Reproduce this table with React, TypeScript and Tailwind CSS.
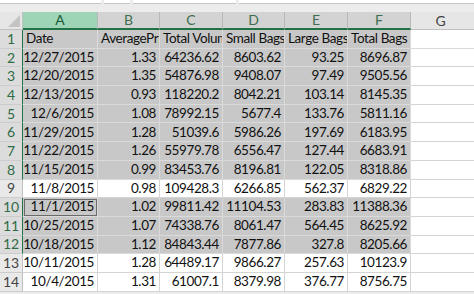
import React from 'react';

const widths = ['w-[75px]', 'w-[62px]', 'w-[63px]', 'w-[62px]', 'w-[63px]', 'w-[63px]'];
const letters = ['A', 'B', 'C', 'D', 'E', 'F'];

const header = ['Date', 'AveragePrice', 'Total Volume', 'Small Bags', 'Large Bags', 'Total Bags'];

const rows: string[][] = [
  ['12/27/2015', '1.33', '64236.62', '8603.62', '93.25', '8696.87'],
  ['12/20/2015', '1.35', '54876.98', '9408.07', '97.49', '9505.56'],
  ['12/13/2015', '0.93', '118220.2', '8042.21', '103.14', '8145.35'],
  ['12/6/2015', '1.08', '78992.15', '5677.4', '133.76', '5811.16'],
  ['11/29/2015', '1.28', '51039.6', '5986.26', '197.69', '6183.95'],
  ['11/22/2015', '1.26', '55979.78', '6556.47', '127.44', '6683.91'],
  ['11/15/2015', '0.99', '83453.76', '8196.81', '122.05', '8318.86'],
  ['11/8/2015', '0.98', '109428.3', '6266.85', '562.37', '6829.22'],
  ['11/1/2015', '1.02', '99811.42', '11104.53', '283.83', '11388.36'],
  ['10/25/2015', '1.07', '74338.76', '8061.47', '564.45', '8625.92'],
  ['10/18/2015', '1.12', '84843.44', '7877.86', '327.8', '8205.66'],
  ['10/11/2015', '1.28', '64489.17', '9866.27', '257.63', '10123.9'],
  ['10/4/2015', '1.31', '61007.1', '8379.98', '376.77', '8756.75'],
];

// rows 9, 13 and 14 are outside the selection
const isSelected = (n: number) => !(n === 9 || n === 13 || n === 14);

const RowHead = ({ n }: { n: number }) => {
  const sel = isSelected(n);
  return (
    <div
      className={`w-[23px] shrink-0 flex items-center justify-center text-[14px] tracking-normal border-b border-[#cccccc] border-r ${
        sel ? 'bg-[#dcdcdc] text-[#2f6b45] border-r-[#217346]' : 'bg-[#e9e9e9] text-[#444] border-r-[#c0c0c0]'
      }`}
    >
      {n}
    </div>
  );
};

export default function App() {
  return (
    <div
      className="w-[474px] h-[294px] overflow-hidden bg-[#ececec] text-[13.5px] tracking-[-0.4px] leading-none text-[#111]"
      style={{ fontFamily: 'Lato, "Liberation Sans", sans-serif' }}
    >
      {/* formula bar strip */}
      <div className="flex gap-[3px] h-[4px]">
        <div className="w-[101px] bg-white border-b border-[#c6c6c6]" />
        <div className="w-[26px] bg-white border-b border-[#c6c6c6]" />
        <div className="w-[103px] bg-white border-b border-[#c6c6c6]" />
        <div className="flex-1 bg-white border-b border-[#c6c6c6]" />
      </div>
      <div className="h-[8px]" />

      {/* column headers */}
      <div className="flex h-[18px] text-[14px] tracking-normal">
        <div className="w-[23px] shrink-0 relative bg-[#e6e6e6] border-r border-b border-[#c0c0c0]">
          <svg className="absolute right-[2px] bottom-[2px]" width="12" height="12" viewBox="0 0 12 12">
            <polygon points="12,0 12,12 0,12" fill="#c4c4c4" />
          </svg>
        </div>
        {letters.map((l, i) => (
          <div
            key={l}
            className={`${widths[i]} shrink-0 flex items-center justify-center border-r border-[#b8b8b8] border-b-2 border-b-[#217346] ${
              i === 0 ? 'bg-[#9fd5b7] text-[#185c37]' : 'bg-[#d3d3d3] text-[#3e6e50]'
            }`}
          >
            {l}
          </div>
        ))}
        <div className="flex-1 flex items-center justify-center bg-[#e6e6e6] text-[#444] border-b border-[#c0c0c0] pr-[4px]">
          G
        </div>
      </div>

      {/* row 1: field names */}
      <div className="flex h-[18.7px]">
        <RowHead n={1} />
        {header.map((h, i) => (
          <div
            key={h}
            className={`${widths[i]} shrink-0 flex items-center overflow-hidden whitespace-nowrap pl-[3px] bg-[#c8c8c8] border-r border-b border-[#dadada]`}
          >
            {h}
          </div>
        ))}
        <div className="flex-1 bg-white border-b border-[#dadada]" />
      </div>

      {rows.map((r, ri) => {
        const n = ri + 2;
        const sel = isSelected(n);
        return (
          <div key={n} className="flex h-[18.7px]">
            <RowHead n={n} />
            {r.map((v, i) => (
              <div
                key={i}
                className={`${widths[i]} shrink-0 flex items-center justify-end overflow-hidden whitespace-nowrap pr-[3px] border-r border-b ${
                  sel ? 'bg-[#c8c8c8] border-[#dadada]' : 'bg-white border-[#d4d4d4]'
                } ${n === 10 && i === 0 ? 'outline outline-1 -outline-offset-2 outline-[#6a6a6a]' : ''}`}
              >
                {v}
              </div>
            ))}
            <div className="flex-1 bg-white border-b border-[#d4d4d4]" />
          </div>
        );
      })}
    </div>
  );
}
